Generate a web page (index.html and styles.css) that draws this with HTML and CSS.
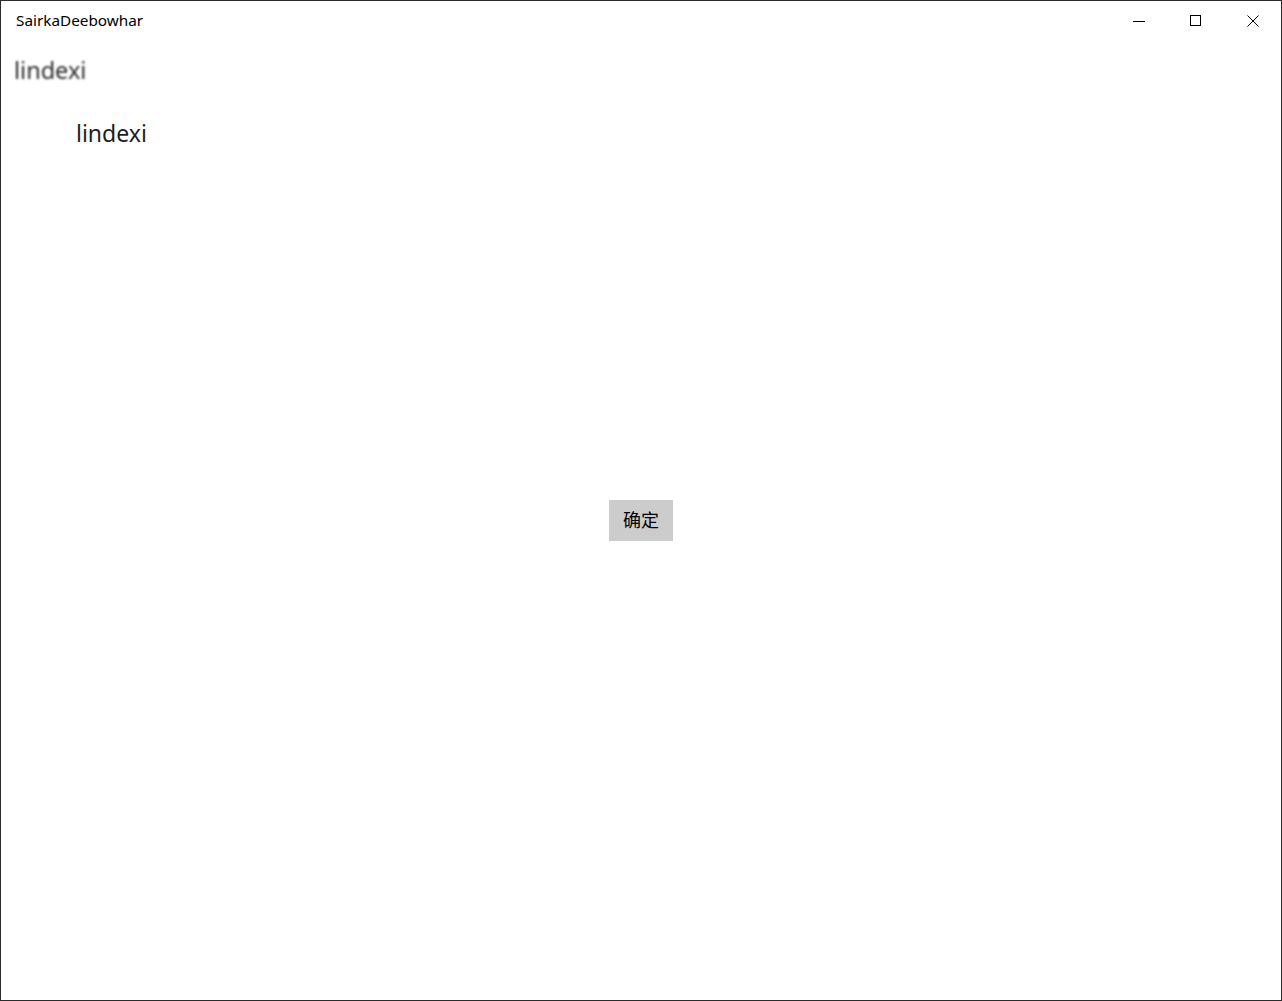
FILE: index.html
```html
<!DOCTYPE html>
<html lang="zh">
<head>
<meta charset="utf-8">
<title>SairkaDeebowhar</title>
<link rel="stylesheet" href="styles.css">
</head>
<body>
<div class="window">
  <div class="titlebar">
    <div class="title">SairkaDeebowhar</div>
    <div class="caption-buttons">
      <div class="cap-btn">
        <svg width="12" height="12" viewBox="0 0 12 12"><path d="M0 6.5H12" stroke="#000" stroke-width="1"/></svg>
      </div>
      <div class="cap-btn">
        <svg width="12" height="12" viewBox="0 0 12 12"><rect x="0.5" y="0.5" width="10" height="10" fill="none" stroke="#000" stroke-width="1"/></svg>
      </div>
      <div class="cap-btn">
        <svg width="12" height="12" viewBox="0 0 12 12"><path d="M0.5 0.5L11.5 11.5M11.5 0.5L0.5 11.5" stroke="#000" stroke-width="1"/></svg>
      </div>
    </div>
  </div>
  <div class="content">
    <div class="texts">
      <div class="blur-text">lindexi</div>
      <div class="plain-text">lindexi</div>
    </div>
    <button class="ok-btn">确定</button>
  </div>
</div>
</body>
</html>
```
FILE: styles.css
```css
html, body {
  margin: 0;
  padding: 0;
  background: #fff;
}
body {
  font-family: "Noto Sans", "Noto Sans CJK SC", sans-serif;
}
.window {
  box-sizing: border-box;
  width: 1282px;
  height: 1001px;
  border: 1px solid #2b2b2b;
  display: flex;
  flex-direction: column;
  background: #fff;
}
.titlebar {
  height: 31px;
  display: flex;
  align-items: center;
  justify-content: space-between;
  flex-shrink: 0;
}
.title {
  padding-left: 15px;
  font-size: 15.3px;
  color: #000;
  line-height: 20px;
  margin-top: 6px;
}
.caption-buttons {
  display: flex;
  align-self: stretch;
}
.cap-btn {
  width: 57px;
  display: flex;
  align-items: center;
  justify-content: center;
  padding-top: 8px;
}
.content {
  flex: 1;
  display: grid;
}
.texts, .ok-btn {
  grid-area: 1 / 1;
}
.texts {
  align-self: start;
  justify-self: start;
  display: flex;
  flex-direction: column;
}
.blur-text {
  font-size: 23.5px;
  line-height: 30px;
  color: #2a2a2a;
  filter: blur(1.1px);
  padding-left: 13px;
  margin-top: 23px;
}
.plain-text {
  font-size: 23px;
  line-height: 30px;
  color: #1e1e1e;
  padding-left: 75px;
  margin-top: 33px;
}
.ok-btn {
  place-self: center;
  margin-top: 9px;
  width: 64px;
  height: 41px;
  border: none;
  background: #cccccc;
  font-family: "Noto Sans CJK SC", sans-serif;
  font-size: 18px;
  color: #000;
  padding: 0 0 3px 0;
}
```
